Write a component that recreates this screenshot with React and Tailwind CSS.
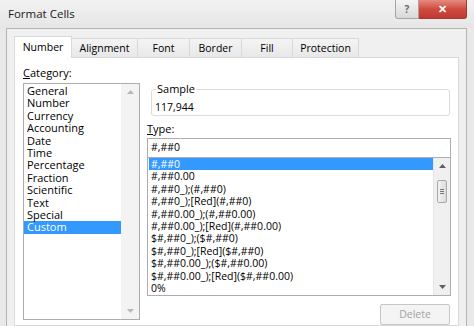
import React from "react";

const categories = [
  "General","Number","Currency","Accounting","Date","Time","Percentage","Fraction","Scientific","Text","Special","Custom",
];
const types = [
  "#,##0",
  "#,##0.00",
  "#,##0_);(#,##0)",
  "#,##0_);[Red](#,##0)",
  "#,##0.00_);(#,##0.00)",
  "#,##0.00_);[Red](#,##0.00)",
  "$#,##0_);($#,##0)",
  "$#,##0_);[Red]($#,##0)",
  "$#,##0.00_);($#,##0.00)",
  "$#,##0.00_);[Red]($#,##0.00)",
  "0%",
];

const tabs = ["Alignment", "Font", "Border", "Fill", "Protection"];
const tabW = { Alignment: "w-[66px]", Font: "w-[52px]", Border: "w-[52px]", Fill: "w-[51px]", Protection: "w-[66px]" };

function Up({ c = "#606060" }) {
  return (
    <svg width="7" height="4" viewBox="0 0 7 4"><path d="M0 4 L3.5 0 L7 4Z" fill={c} /></svg>
  );
}
function Down({ c = "#606060" }) {
  return (
    <svg width="7" height="4" viewBox="0 0 7 4"><path d="M0 0 L3.5 4 L7 0Z" fill={c} /></svg>
  );
}

export default function App() {
  return (
    <div
      className="w-[474px] h-[326px] overflow-hidden bg-[#e9e9e9] flex flex-col text-black"
      style={{ fontFamily: '"Open Sans", "Liberation Sans", sans-serif' }}
    >
      {/* title bar */}
      <div className="h-[28px] flex items-start justify-between shrink-0 bg-gradient-to-b from-[#f2f2f2] to-[#e6e6e6]">
        <div className="pl-[8px] pt-[6px] text-[11.5px] leading-[16px] text-[#1a1a1a]">Format Cells</div>
        <div className="flex pr-[7px]">
          <div className="w-[24px] h-[19px] border border-[#a6a6a6] border-t-0 rounded-bl-[3px] bg-gradient-to-b from-[#f4f4f4] to-[#d9d9d9] flex items-center justify-center text-[10px] font-bold text-[#6a6a6a]">?</div>
          <div className="w-[48px] h-[19px] border border-[#a33a32] border-t-0 border-l-0 rounded-br-[3px] bg-gradient-to-b from-[#e58a80] via-[#cf4b40] to-[#c0392e] flex items-center justify-center text-[11px] font-bold text-white">✕</div>
        </div>
      </div>

      {/* window body */}
      <div className="flex-1 ml-[6px] w-[461px] border-l border-t border-r border-[#b4b4b4] bg-[#f0f0f0] flex flex-col pl-[7px] pr-[7px] pt-[7px]">
        {/* tabs */}
        <div className="flex items-end h-[21px] relative z-10">
          <div className="w-[58px] h-[22px] mb-[-1px] bg-white border border-b-0 border-[#d9d9d9] flex items-center justify-center text-[10.5px] leading-[14px] pb-[1px]">
            Number
          </div>
          {tabs.map((t) => (
            <div
              key={t}
              className={`${tabW[t]} h-[19px] border border-l-0 border-b-0 border-[#d9d9d9] bg-gradient-to-b from-[#f4f4f4] to-[#e8e8e8] flex items-center justify-center text-[10.5px] leading-[14px]`}
            >
              {t}
            </div>
          ))}
        </div>

        {/* panel */}
        <div className="flex-1 bg-white border border-[#d9d9d9] flex gap-[7px] pl-[8px]">
          {/* left */}
          <div className="flex flex-col pt-[8px]">
            <div className="text-[11px] leading-[14px] h-[14px]"><span className="underline">C</span>ategory:</div>
            <div className="mt-[3px] w-[117px] h-[237px] border border-[#abadb3] flex">
              <div className="flex-1 pt-[1px]">
                {categories.map((c) => (
                  <div
                    key={c}
                    className={`h-[12.4px] leading-[12.4px] text-[11px] pl-[3px] ${c === "Custom" ? "bg-[#3399ff] text-white" : ""}`}
                  >
                    {c}
                  </div>
                ))}
              </div>
              <div className="w-[18px] bg-[#f3f3f3] flex flex-col items-center justify-between py-[6px]">
                <Up c="#b8b8b8" />
                <Down c="#b8b8b8" />
              </div>
            </div>
          </div>

          {/* right */}
          <div className="w-[304px] flex flex-col pt-[24px]">
            <fieldset className="ml-[4px] w-[299px] h-[34px] border border-[#dcdcdc] rounded-[3px] pl-[3px] pt-[4px]">
              <legend className="text-[11px] leading-[14px] px-[1px] ml-[1px]">Sample</legend>
              <div className="text-[10.5px] leading-[14px]">117,944</div>
            </fieldset>
            <div className="mt-[6px] text-[11px] leading-[14px] h-[14px]"><span className="underline">T</span>ype:</div>
            <div className="mt-[2px] h-[20px] border border-[#abadb3] flex items-center pl-[3px] text-[10.5px]">#,##0</div>
            <div className="h-[138px] border border-t-0 border-[#abadb3] flex">
              <div className="flex-1 pl-[1px]">
                {types.map((t, i) => (
                  <div
                    key={t}
                    className={`h-[12.4px] leading-[12.4px] text-[10.5px] pl-[2px] whitespace-nowrap ${i === 0 ? "bg-[#3399ff] text-white" : ""}`}
                  >
                    {t}
                  </div>
                ))}
              </div>
              <div className="w-[17px] bg-[#f0f0f0] border-l border-[#e6e6e6] flex flex-col items-center py-[6px]">
                <Up />
                <div className="mt-[12px] w-[10px] h-[23px] border border-[#a9a9a9] rounded-[2px] bg-gradient-to-r from-[#f2f2f2] to-[#dcdcdc] flex flex-col items-center justify-center gap-[1px]">
                  <div className="w-[4px] h-[1px] bg-[#777]" />
                  <div className="w-[4px] h-[1px] bg-[#777]" />
                  <div className="w-[4px] h-[1px] bg-[#777]" />
                </div>
                <div className="flex-1" />
                <Down />
              </div>
            </div>
            <div className="mt-[8px] self-end mr-[1px] w-[70px] h-[21px] border border-[#c6c6c6] rounded-[2px] bg-[#f4f4f4] flex items-center justify-center text-[10.5px] text-[#a3a3a3]">
              Delete
            </div>
          </div>
        </div>
      </div>
    </div>
  );
}
